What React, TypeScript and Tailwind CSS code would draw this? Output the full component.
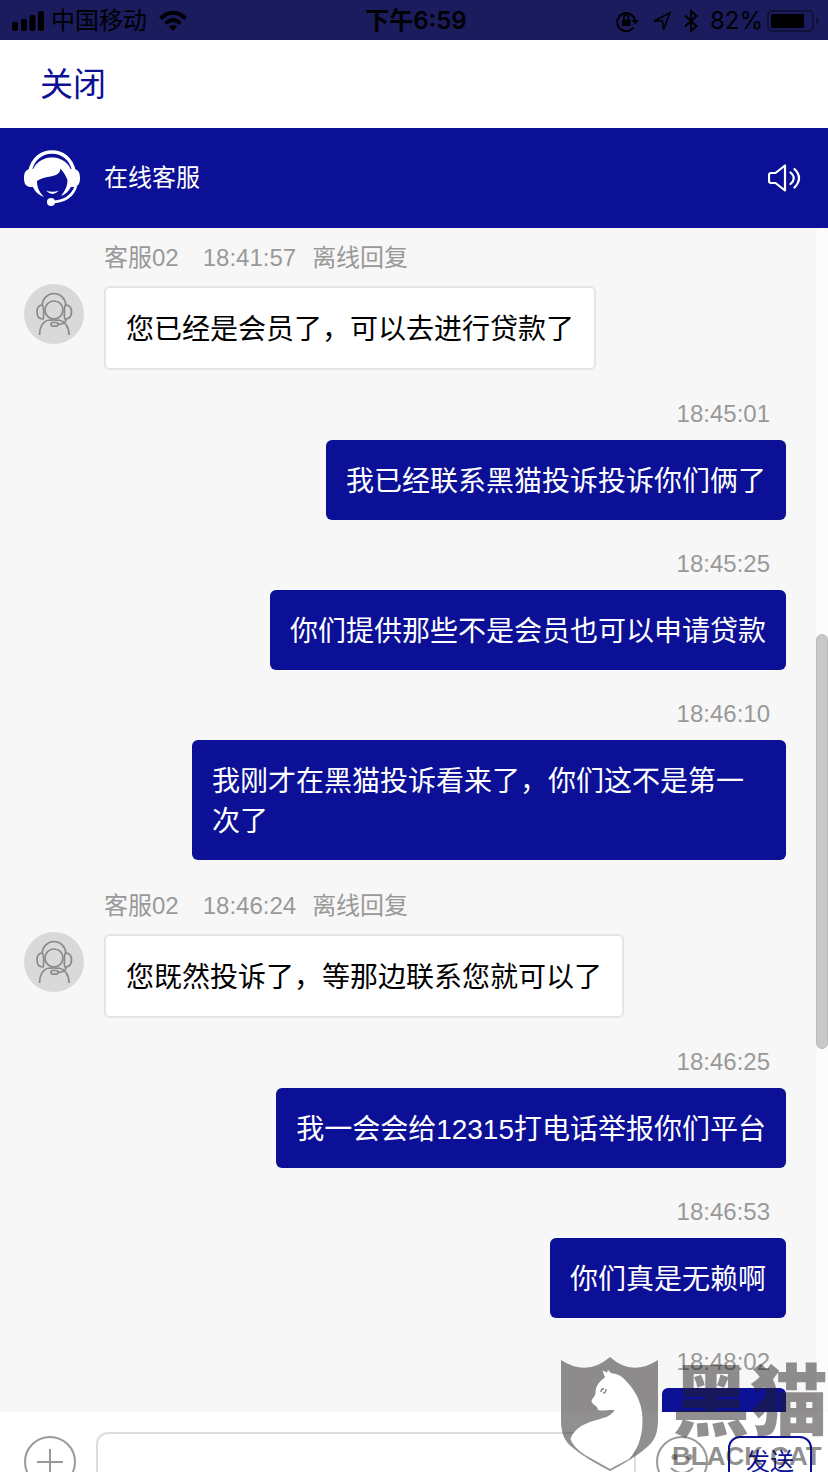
import React, { useState } from 'react';

interface Message {
  id: number;
  from: 'agent' | 'user';
  time: string;
  text: string;
}

const messages: Message[] = [
  { id: 1, from: 'agent', time: '18:41:57', text: '您已经是会员了，可以去进行贷款了' },
  { id: 2, from: 'user', time: '18:45:01', text: '我已经联系黑猫投诉投诉你们俩了' },
  { id: 3, from: 'user', time: '18:45:25', text: '你们提供那些不是会员也可以申请贷款' },
  { id: 4, from: 'user', time: '18:46:10', text: '我刚才在黑猫投诉看来了，你们这不是第一次了' },
  { id: 5, from: 'agent', time: '18:46:24', text: '您既然投诉了，等那边联系您就可以了' },
  { id: 6, from: 'user', time: '18:46:25', text: '我一会会给12315打电话举报你们平台' },
  { id: 7, from: 'user', time: '18:46:53', text: '你们真是无赖啊' },
  { id: 8, from: 'user', time: '18:48:02', text: '' },
];

const StatusBar: React.FC = () => (
  <div className="grid h-10 shrink-0 grid-cols-[1fr_auto_1fr] items-center bg-[#1a1c5e] pt-0.5 pr-2 pl-3 font-['Inter','Noto_Sans_CJK_SC',sans-serif] text-2xl text-black">
    <div className="flex items-center">
      <svg width="33" height="20" viewBox="0 0 33 20" className="mr-1.5" aria-hidden="true">
        <rect x="0" y="11" width="6" height="9" rx="2" />
        <rect x="9" y="8" width="6" height="12" rx="2" />
        <rect x="17.500" y="4" width="6" height="16" rx="2" />
        <rect x="26" y="0" width="6" height="20" rx="2" />
      </svg>
      <span>中国移动</span>
      <svg width="28" height="20" viewBox="0 0 28 20" className="ml-3" aria-hidden="true">
        <path d="M1.500 7.500Q14-4 26.500 7.500" fill="none" stroke="#000" strokeWidth="4" />
        <path d="M6.500 12.500Q14 5.500 21.500 12.500" fill="none" stroke="#000" strokeWidth="3.600" />
        <path d="M14 20 9.800 15.800Q14 12.200 18.200 15.800Z" />
      </svg>
    </div>
    <span className="font-semibold">下午6:59</span>
    <div className="flex items-center justify-end">
      <svg width="24" height="22" viewBox="0 0 24 22" className="mr-3" aria-hidden="true">
        <path d="M17.500 17.500A9 9 0 1 1 19 10" fill="none" stroke="#000" strokeWidth="2" />
        <path d="M15.500 10H23L19.200 14.300Z" />
        <rect x="6" y="9.500" width="8.500" height="6.500" rx="1" />
        <path d="M7.800 10V7.500a2.400 2.400 0 0 1 4.800 0V10" fill="none" stroke="#000" strokeWidth="1.500" />
      </svg>
      <svg width="20" height="20" viewBox="0 0 20 20" className="mr-3" aria-hidden="true">
        <path d="M2 10 18 2 11.500 18.500 10.500 10Z" fill="none" stroke="#000" strokeWidth="1.600" />
      </svg>
      <svg width="14" height="24" viewBox="0 0 14 24" className="mr-3" aria-hidden="true">
        <path d="M1 6.500 12.500 17 7 22V2l5.500 5L1 17.500" fill="none" stroke="#000" strokeWidth="2" />
      </svg>
      <span className="mr-1">82%</span>
      <svg width="53" height="22" viewBox="0 0 53 22" aria-hidden="true">
        <rect x="1" y="1" width="45" height="20" rx="4" fill="none" stroke="#111238" strokeWidth="2" />
        <rect x="4" y="4" width="33" height="14" rx="1.500" />
        <path d="M49 7q3 1 3 4t-3 4z" fill="#111238" />
      </svg>
    </div>
  </div>
);

const HeadsetLogo: React.FC = () => (
  <svg width="56" height="56" viewBox="0 0 56 56" fill="#fff" className="shrink-0" aria-hidden="true">
    <path d="M6 21C9 8 18 2 28 2s19 6 22 19" fill="none" stroke="#fff" strokeWidth="3.600" />
    <path d="M9.500 19v18H5.500C2 36 0 34 0 28s2-8 5.500-9ZM46.500 19v18h4c3.500-1 5.500-3 5.500-9s-2-8-5.500-9Z" />
    <path d="M7 30C7 15 17 7.500 28 7.500S49 15 49 30c-1 8-6 14-12 16 4-5 6.500-10 6.500-16-1.500-4-4-8-7-11.500-.5 5-4 7-10 8-6 1-10.500 2-13.500 4.500C13 37 15 42 20 47 12 44 8 38 7 30Z" />
    <path d="M22 40.500q6.500 2.500 13 0-6.500 7-13 0Z" />
    <path d="M52 36C49 45 42 51.500 28 52" fill="none" stroke="#fff" strokeWidth="2.600" />
    <circle cx="27" cy="52" r="4" />
  </svg>
);

const AgentAvatar: React.FC = () => (
  <svg width="60" height="60" viewBox="0 0 60 60" fill="none" stroke="#8a8a8a" strokeWidth="1.700" className="shrink-0" aria-hidden="true">
    <circle cx="30" cy="30" r="30" fill="#d9d9d9" stroke="none" />
    <circle cx="30" cy="26" r="9" />
    <path d="M18 21C19 14 24 9.500 30 9.500S41 14 42 21" />
    <path d="M18.500 21c-4 0-5.500 3-5.500 7s2 7 6 7c1-1 .8-13-.5-14ZM41.500 21c4 0 6 3 6 7s-2 7-6.500 7c-1-1-.8-13 .5-14Z" />
    <path d="M15.500 51C15.500 43 19 37 25 36M34 36c7 .5 11 7 11 15M25 36.300q5-1 9.500 0" />
    <rect x="27" y="38.500" width="7" height="3.600" rx="1.800" />
    <path d="M34 40.300q7 0 8.500-5.300" />
  </svg>
);

const AgentMessage: React.FC<{ message: Message }> = ({ message }) => (
  <li className="mt-[30px] first:mt-0">
    <div className="mb-2.5 ml-20 flex text-2xl text-[#999]">
      <span>客服02</span>
      <time className="ml-6">{message.time}</time>
      <span className="ml-4">离线回复</span>
    </div>
    <div className="flex items-start gap-5">
      <AgentAvatar />
      <p className="mt-0.5 max-w-[594px] rounded-md border-2 border-[#e5e5e5] bg-white px-5 pt-[22px] pb-[18px] text-[28px]/[40px] text-black">
        {message.text}
      </p>
    </div>
  </li>
);

const UserMessage: React.FC<{ message: Message }> = ({ message }) => (
  <li className="mt-7 flex flex-col items-end pr-[6px]">
    <time className="mr-4 mb-2.5 text-2xl text-[#999]">{message.time}</time>
    <p className="min-h-20 min-w-31 max-w-[594px] rounded-md bg-[#0b1096] px-5 pt-[22px] pb-[18px] text-[28px]/[40px] text-white">
      {message.text}
    </p>
  </li>
);

const Watermark: React.FC = () => (
  <div className="pointer-events-none absolute right-0 bottom-0 flex items-end gap-3.5 text-[#231f20]/50">
    <svg width="97" height="115" viewBox="0 0 97 115" aria-hidden="true">
      <path d="M0 3Q26 20 49 0 71 20 97 3V62C97 76 94 84 85 91Q74 101 49 114 24 101 12 91C3 84 0 76 0 62Z" fill="currentColor" />
      <path
        d="M41.500 13.500 46 15.500 47 13 50 16C57 17 61 19 65 24 77 36 82 50 81.500 66 81 81 76 94 68 102L49 112 24 98Q12 90 9.500 82C12 74 20 67.500 32 64 43 61 51 59 53.500 53 47 52.500 42 54.500 37 53 36.500 48 31 48 30.500 44 31 41 35 39 34.500 35 35 28 39 24 44 20.500Z"
        fill="#fff"
      />
      <path d="M40 35q0-3 3-3.500M42 36q3 0 3-4" fill="none" stroke="#8c8a8a" strokeWidth="1.500" />
    </svg>
    <div className="flex flex-col pb-0.5">
      <span className="text-[78px]/[78px] font-black">黑猫</span>
      <span className="text-[26px]/[28px] font-bold">BLACK CAT</span>
    </div>
  </div>
);

const App: React.FC = () => {
  const [draft, setDraft] = useState('');

  return (
    <div className="relative flex h-screen flex-col overflow-hidden bg-white font-['Liberation_Sans','Noto_Sans_CJK_SC',sans-serif]">
      <StatusBar />

      <nav className="flex h-22 shrink-0 items-center px-10 pt-0.5">
        <button type="button" className="text-[33px] text-[#0b1096]">关闭</button>
      </nav>

      <header className="flex h-25 shrink-0 items-center bg-[#0b1096] px-6 text-white">
        <HeadsetLogo />
        <h1 className="ml-6 text-2xl">在线客服</h1>
        <button type="button" aria-label="声音" className="ml-auto">
          <svg width="36" height="28" viewBox="0 0 36 28" fill="none" stroke="#fff" strokeWidth="2.200" strokeLinecap="round" strokeLinejoin="round">
            <path d="M7.500 9 17 1.500v25L7.500 19H3q-2 0-2-2v-6q0-2 2-2Z" />
            <path d="M22.500 8.500q6.500 5.500 0 11.500M26.500 5q9 9 0 18.500" />
          </svg>
        </button>
      </header>

      <main className="flex min-h-0 flex-1 bg-[#f7f7f7]">
        <ul className="flex-1 overflow-hidden pt-3.5 pr-6 pl-6">
          {messages.map((message) =>
            message.from === 'agent' ? (
              <AgentMessage key={message.id} message={message} />
            ) : (
              <UserMessage key={message.id} message={message} />
            )
          )}
        </ul>
        <div className="flex w-3 flex-col rounded-full bg-[#fcfcfc]">
          <div className="h-[34.3%]" />
          <div className="h-[35%] rounded-full border border-[#bcbcbc] bg-[#c8c8c8]" />
        </div>
      </main>

      <footer className="flex h-15 shrink-0 items-start gap-5 overflow-hidden bg-white pt-5 pr-4 pl-6">
        <button type="button" aria-label="更多" className="mt-1 shrink-0">
          <svg width="52" height="52" viewBox="0 0 52 52" fill="none" stroke="#999" strokeWidth="2">
            <circle cx="26" cy="26" r="25" />
            <path d="M13 26h26M26 13v26" />
          </svg>
        </button>
        <input
          type="text"
          aria-label="消息"
          value={draft}
          onChange={e => setDraft(e.target.value)}
          className="h-15 min-w-0 flex-1 rounded-xl border-2 border-[#ddd] px-4 text-[28px] outline-none"
        />
        <button type="button" aria-label="表情" className="mt-1 shrink-0">
          <svg width="52" height="52" viewBox="0 0 52 52" fill="none" stroke="#999" strokeWidth="2">
            <circle cx="26" cy="26" r="25" />
            <circle cx="18.500" cy="21" r="3" fill="#999" stroke="none" />
            <circle cx="33.500" cy="21" r="3" fill="#999" stroke="none" />
            <path d="M15 32q11 10 22 0" />
          </svg>
        </button>
        <button type="button" className="mt-1 h-13 w-21 shrink-0 rounded-xl border-2 border-[#0b1096] bg-white text-2xl text-[#0b1096]">
          发送
        </button>
      </footer>

      <Watermark />
    </div>
  );
};

export default App;
